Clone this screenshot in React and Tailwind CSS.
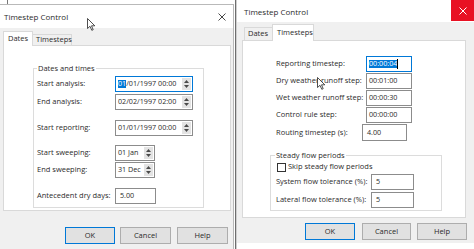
import React from 'react';

// Small up/down spinner shown inside date fields
function Spin() {
  return (
    <div className="ml-auto mr-[1px] flex h-[12px] w-[9px] flex-col items-center justify-center gap-[2px] bg-[#e3e3e3]">
      <svg width="5" height="3" viewBox="0 0 5 3"><path d="M0 3L2.5 0L5 3Z" fill="#4a4a4a" /></svg>
      <svg width="5" height="3" viewBox="0 0 5 3"><path d="M0 0L2.5 3L5 0Z" fill="#4a4a4a" /></svg>
    </div>
  );
}

function Field({ className = '', focus = false, children }) {
  return (
    <div
      className={`flex h-[16px] items-center border bg-white pl-[2px] text-[7.2px] leading-none ${
        focus ? 'border-[#0078d7]' : 'border-[#8c8c8c]'
      } ${className}`}
    >
      {children}
    </div>
  );
}

function Btn({ label, primary = false, className = '' }) {
  return (
    <div
      className={`flex h-[17px] items-center justify-center border bg-[#e1e1e1] ${
        primary ? 'border-[#0078d7]' : 'border-[#adadad]'
      } ${className}`}
    >
      {label}
    </div>
  );
}

function Cursor({ className }) {
  return (
    <svg className={className} width="9" height="13" viewBox="0 0 9 13">
      <path
        d="M0.5 0.5L0.5 10.5L3 8.3L4.8 12.3L6.2 11.7L4.5 7.8L7.8 7.8Z"
        fill="#fff"
        stroke="#222"
        strokeWidth="0.8"
        strokeLinejoin="round"
      />
    </svg>
  );
}

export default function App() {
  return (
    <div className="relative flex h-[249px] w-[474px] overflow-hidden bg-white font-['Open_Sans','Liberation_Sans',sans-serif] text-[7.5px] text-[#2b2b2b]">
      {/* Left dialog: Dates tab */}
      <div className="flex w-[234px] flex-col">
        <div className="h-[4px]">
          <div className="ml-[7px] h-[4px] w-[1px] bg-[#777]" />
        </div>
        <div className="flex flex-1 flex-col border-t border-r border-[#b9b9b9]">
          <div className="flex h-[23px] items-center bg-white pl-[4px] pr-[7px]">
            <span className="text-[8px]">Timestep Control</span>
            <svg className="ml-auto" width="8" height="8" viewBox="0 0 8 8">
              <path d="M0.5 0.5L7.5 7.5M7.5 0.5L0.5 7.5" stroke="#333" strokeWidth="0.9" />
            </svg>
          </div>
          <div className="flex flex-1 flex-col bg-[#f0f0f0] pt-[3px]">
            <div className="flex items-end pl-[3px]">
              <div className="relative z-10 -mb-px flex h-[15px] w-[30px] items-center border border-b-0 border-[#d9d9d9] bg-white pl-[4px]">
                Dates
              </div>
              <div className="flex h-[11px] w-[39px] items-center border border-b-0 border-l-0 border-[#d9d9d9] bg-[#f0f0f0] pl-[3px]">
                Timesteps
              </div>
            </div>
            <div className="ml-[3px] h-[166px] w-[228px] border border-[#d9d9d9] bg-white pt-[17px]">
              <fieldset className="ml-[29px] w-[171px] border border-[#dcdcdc] pb-[3px]">
                <legend className="ml-[3px] px-[1px] leading-[10px]">Dates and times</legend>
                <div className="mt-[3px] flex h-[16px] items-center pl-[3px]">
                  <span className="w-[78px]">Start analysis:</span>
                  <Field className="w-[78px]" focus>
                    <span className="bg-[#0078d7] text-white">01</span>
                    <span>/01/1997 00:00</span>
                    <Spin />
                  </Field>
                </div>
                <div className="mt-[2px] flex h-[16px] items-center pl-[3px]">
                  <span className="w-[78px]">End analysis:</span>
                  <Field className="w-[78px]">
                    <span>02/02/1997 02:00</span>
                    <Spin />
                  </Field>
                </div>
                <div className="mt-[10px] flex h-[16px] items-center pl-[3px]">
                  <span className="w-[78px]">Start reporting:</span>
                  <Field className="w-[78px]">
                    <span>01/01/1997 00:00</span>
                    <Spin />
                  </Field>
                </div>
                <div className="mt-[9px] flex h-[16px] items-center pl-[3px]">
                  <span className="w-[78px]">Start sweeping:</span>
                  <Field className="w-[40px]">
                    <span>01 Jan</span>
                    <Spin />
                  </Field>
                </div>
                <div className="mt-[1px] flex h-[16px] items-center pl-[3px]">
                  <span className="w-[78px]">End sweeping:</span>
                  <Field className="w-[40px]">
                    <span>31 Dec</span>
                    <Spin />
                  </Field>
                </div>
                <div className="mt-[10px] flex h-[16px] items-center pl-[3px]">
                  <span className="w-[78px]">Antecedent dry days:</span>
                  <Field className="w-[41px]">
                    <span className="pl-[2px]">5.00</span>
                  </Field>
                </div>
              </fieldset>
            </div>
            <div className="mt-[16px] flex pl-[65px]">
              <Btn label="OK" primary className="w-[50px]" />
              <Btn label="Cancel" className="ml-[5px] w-[51px]" />
              <Btn label="Help" className="ml-[6px] w-[51px]" />
            </div>
          </div>
        </div>
      </div>

      {/* Gap between the two windows */}
      <div className="w-[1px] bg-white" />
      <div className="w-[1px] bg-[#6e6e6e]" />

      {/* Right dialog: Timesteps tab */}
      <div className="flex w-[238px] flex-col border-l border-[#cfcfcf]">
        <div className="flex h-[22px] items-start bg-white">
          <span className="mt-[6px] pl-[7px] text-[8px]">Timestep Control</span>
          <div className="ml-auto flex h-[21px] w-[23px] items-center justify-center bg-[#e81123]">
            <svg width="8" height="8" viewBox="0 0 8 8">
              <path d="M0.5 0.5L7.5 7.5M7.5 0.5L0.5 7.5" stroke="#fff" strokeWidth="1" />
            </svg>
          </div>
        </div>
        <div className="flex h-[221px] flex-col bg-[#f0f0f0] pt-[2px]">
          <div className="flex items-end pl-[7px]">
            <div className="flex h-[13px] w-[28px] items-center border border-b-0 border-r-0 border-[#d9d9d9] bg-[#f0f0f0] pl-[3px]">
              Dates
            </div>
            <div className="relative z-10 -mb-px flex h-[17px] w-[42px] items-center border border-b-0 border-[#d9d9d9] bg-white pl-[4px]">
              Timesteps
            </div>
          </div>
          <div className="ml-[5px] h-[178px] w-[224px] border border-[#d9d9d9] bg-white pt-[15px]">
            <div className="flex h-[16px] items-center pl-[33px]">
              <span className="w-[90px]">Reporting timestep:</span>
              <Field className="w-[46px]" focus>
                <span className="bg-[#0078d7] text-white">00:00:04</span>
                <span className="h-[10px] w-[1px] bg-black" />
              </Field>
            </div>
            <div className="mt-[1px] flex h-[16px] items-center pl-[33px]">
              <span className="w-[90px]">Dry weather runoff step:</span>
              <Field className="w-[46px]">
                <span>00:01:00</span>
              </Field>
            </div>
            <div className="mt-[1px] flex h-[16px] items-center pl-[33px]">
              <span className="w-[90px]">Wet weather runoff step:</span>
              <Field className="w-[46px]">
                <span>00:00:30</span>
              </Field>
            </div>
            <div className="mt-[1px] flex h-[16px] items-center pl-[33px]">
              <span className="w-[90px]">Control rule step:</span>
              <Field className="w-[46px]">
                <span>00:00:00</span>
              </Field>
            </div>
            <div className="mt-[1px] flex h-[17px] items-center pl-[33px]">
              <span className="w-[86px]">Routing timestep (s):</span>
              <Field className="h-[17px] w-[45px]">
                <span className="pl-[2px]">4.00</span>
              </Field>
            </div>
            <fieldset className="mt-[9px] ml-[27px] w-[172px] border border-[#dcdcdc] pb-[2px]">
              <legend className="ml-[4px] px-[1px] leading-[10px]">Steady flow periods</legend>
              <div className="mt-[2px] flex h-[10px] items-center pl-[6px]">
                <div className="h-[9px] w-[9px] border border-[#333] bg-white" />
                <span className="ml-[2px]">Skip steady flow periods</span>
              </div>
              <div className="mt-[2px] flex h-[16px] items-center pl-[5px]">
                <span className="w-[95px]">System flow tolerance (%):</span>
                <Field className="w-[43px]">
                  <span className="pl-[2px]">5</span>
                </Field>
              </div>
              <div className="mt-[2px] flex h-[16px] items-center pl-[5px]">
                <span className="w-[95px]">Lateral flow tolerance (%):</span>
                <Field className="w-[43px]">
                  <span className="pl-[2px]">5</span>
                </Field>
              </div>
            </fieldset>
          </div>
          <div className="mt-[5px] flex pl-[68px]">
            <Btn label="OK" primary className="w-[50px]" />
            <Btn label="Cancel" className="ml-[7px] w-[49px]" />
            <Btn label="Help" className="ml-[6px] w-[50px]" />
          </div>
        </div>
      </div>

      {/* Mouse pointers lying over the dialogs */}
      <Cursor className="absolute left-[87px] top-[18px]" />
      <Cursor className="absolute left-[317px] top-[77px]" />
    </div>
  );
}
